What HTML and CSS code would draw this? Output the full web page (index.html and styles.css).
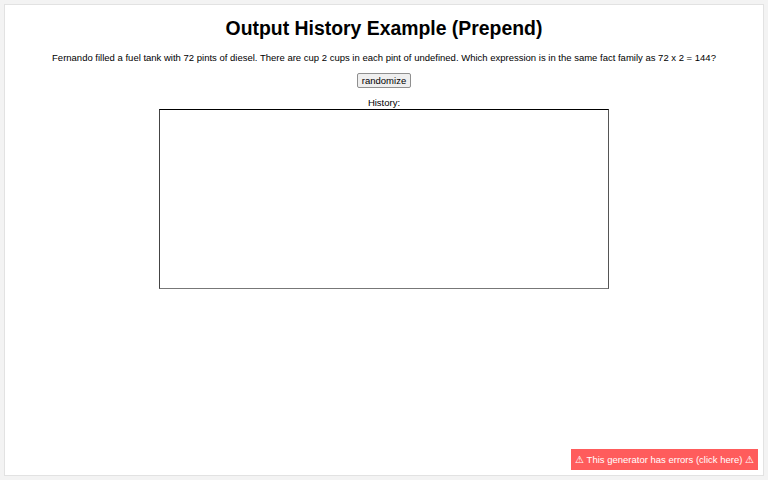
FILE: index.html
```html
<!DOCTYPE html>
<html>
<head>
<meta charset="utf-8">
<link rel="stylesheet" href="styles.css">
</head>
<body>
<div class="panel">
  <h1 class="title">Output History Example (Prepend)</h1>
  <p class="question">Fernando filled a fuel tank with 72 pints of diesel. There are cup 2 cups in each pint of undefined. Which expression is in the same fact family as 72 x 2 = 144?</p>
  <div class="controls"><button class="btn">randomize</button></div>
  <div class="label">History:</div>
  <div class="history"></div>
</div>
<div class="errors">⚠ This generator has errors (click here) ⚠</div>
</body>
</html>
```
FILE: styles.css
```css
html, body {
  margin: 0;
  height: 100%;
}
body {
  background: #f3f3f3;
  padding: 4px;
  box-sizing: border-box;
  font-family: "Liberation Sans", Arial, sans-serif;
  color: #000;
}
.panel {
  background: #fff;
  border: 1px solid #e2e2e2;
  height: 100%;
  box-sizing: border-box;
  display: flex;
  flex-direction: column;
  align-items: center;
}
.title {
  font-size: 19.4px;
  font-weight: bold;
  margin: 12px 0 0;
  line-height: 23px;
}
.question {
  font-size: 9.5px;
  margin: 12px 0 0;
  line-height: 12px;
}
.controls {
  margin-top: 6px;
}
.btn {
  font-family: "Liberation Sans", Arial, sans-serif;
  font-size: 9.5px;
  padding: 1px 4px;
  height: 15px;
  line-height: 11px;
  background: #efefef;
  border: 1px solid #8f8f8f;
  border-radius: 2px;
  color: #000;
}
.label {
  font-size: 9.5px;
  line-height: 12px;
  margin-top: 9px;
}
.history {
  width: 450px;
  height: 180px;
  box-sizing: border-box;
  border-style: solid;
  border-width: 1px;
  border-color: #000 #555 #777 #444;
}
.errors {
  position: fixed;
  right: 10px;
  bottom: 10px;
  background: #ff5c5c;
  color: #fff;
  font-size: 9.5px;
  line-height: 21px;
  padding: 0 4px;
}
```
